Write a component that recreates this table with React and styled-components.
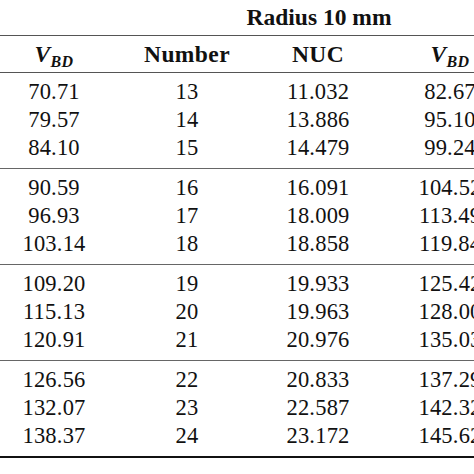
import React from 'react'
import styled, { createGlobalStyle } from 'styled-components'

const GlobalStyle = createGlobalStyle`
  html, body {
    margin: 0;
    padding: 0;
    background: #fff;
  }
  body {
    width: 474px;
    height: 474px;
    overflow: hidden;
    color: #111;
  }
`

const serif = `"Liberation Serif", "Times New Roman", "DejaVu Serif", serif`

const Table = styled.div`
  width: 530px;
  display: flex;
  flex-direction: column;
  font-family: ${serif};
`

const Row = styled.div`
  display: grid;
  grid-template-columns: 108px 158px 104px 160px;
  align-items: center;
  height: ${p => p.h || 28}px;
  font-size: ${p => p.fs || 22.5}px;
  font-family: ${serif};
`

const Cell = styled.div`
  text-align: center;
  white-space: nowrap;
  font-family: ${serif};
  font-weight: ${p => (p.bold ? 700 : 400)};
  font-style: ${p => (p.italic ? 'italic' : 'normal')};
  letter-spacing: ${p => (p.bold ? '0.4px' : '0.2px')};
`

const Title = styled.div`
  grid-column: 2 / 5;
  text-align: center;
  font-family: ${serif};
  font-weight: 700;
  font-size: 23.5px;
`

const Group = styled.div`
  padding: 5px 0 6px;
  border-bottom: ${p => (p.last ? '2.5px solid #111' : '1px solid #666')};
`

const HeadWrap = styled.div`
  border-top: 1.5px solid #555;
  border-bottom: 1.5px solid #555;
`

const Sub = styled.sub`
  font-size: 0.68em;
  vertical-align: -0.3em;
  line-height: 0;
`

const VBD = () => (
  <Cell bold italic>
    V<Sub>BD</Sub>
  </Cell>
)

const groups = [
  [
    ['70.71', '13', '11.032', '82.67'],
    ['79.57', '14', '13.886', '95.10'],
    ['84.10', '15', '14.479', '99.24']
  ],
  [
    ['90.59', '16', '16.091', '104.52'],
    ['96.93', '17', '18.009', '113.49'],
    ['103.14', '18', '18.858', '119.84']
  ],
  [
    ['109.20', '19', '19.933', '125.42'],
    ['115.13', '20', '19.963', '128.00'],
    ['120.91', '21', '20.976', '135.03']
  ],
  [
    ['126.56', '22', '20.833', '137.29'],
    ['132.07', '23', '22.587', '142.32'],
    ['138.37', '24', '23.172', '145.62']
  ]
]

const App = () => (
  <>
    <GlobalStyle />
    <Table>
      <Row h={35}>
        <Title>Radius 10 mm</Title>
      </Row>
      <HeadWrap>
        <Row h={36} fs={23.5}>
          <VBD />
          <Cell bold>Number</Cell>
          <Cell bold>NUC</Cell>
          <VBD />
        </Row>
      </HeadWrap>
      {groups.map((rows, gi) => (
        <Group key={gi} last={gi === groups.length - 1}>
          {rows.map((r, ri) => (
            <Row key={ri}>
              {r.map((v, ci) => (
                <Cell key={ci}>{v}</Cell>
              ))}
            </Row>
          ))}
        </Group>
      ))}
    </Table>
  </>
)

export default App
